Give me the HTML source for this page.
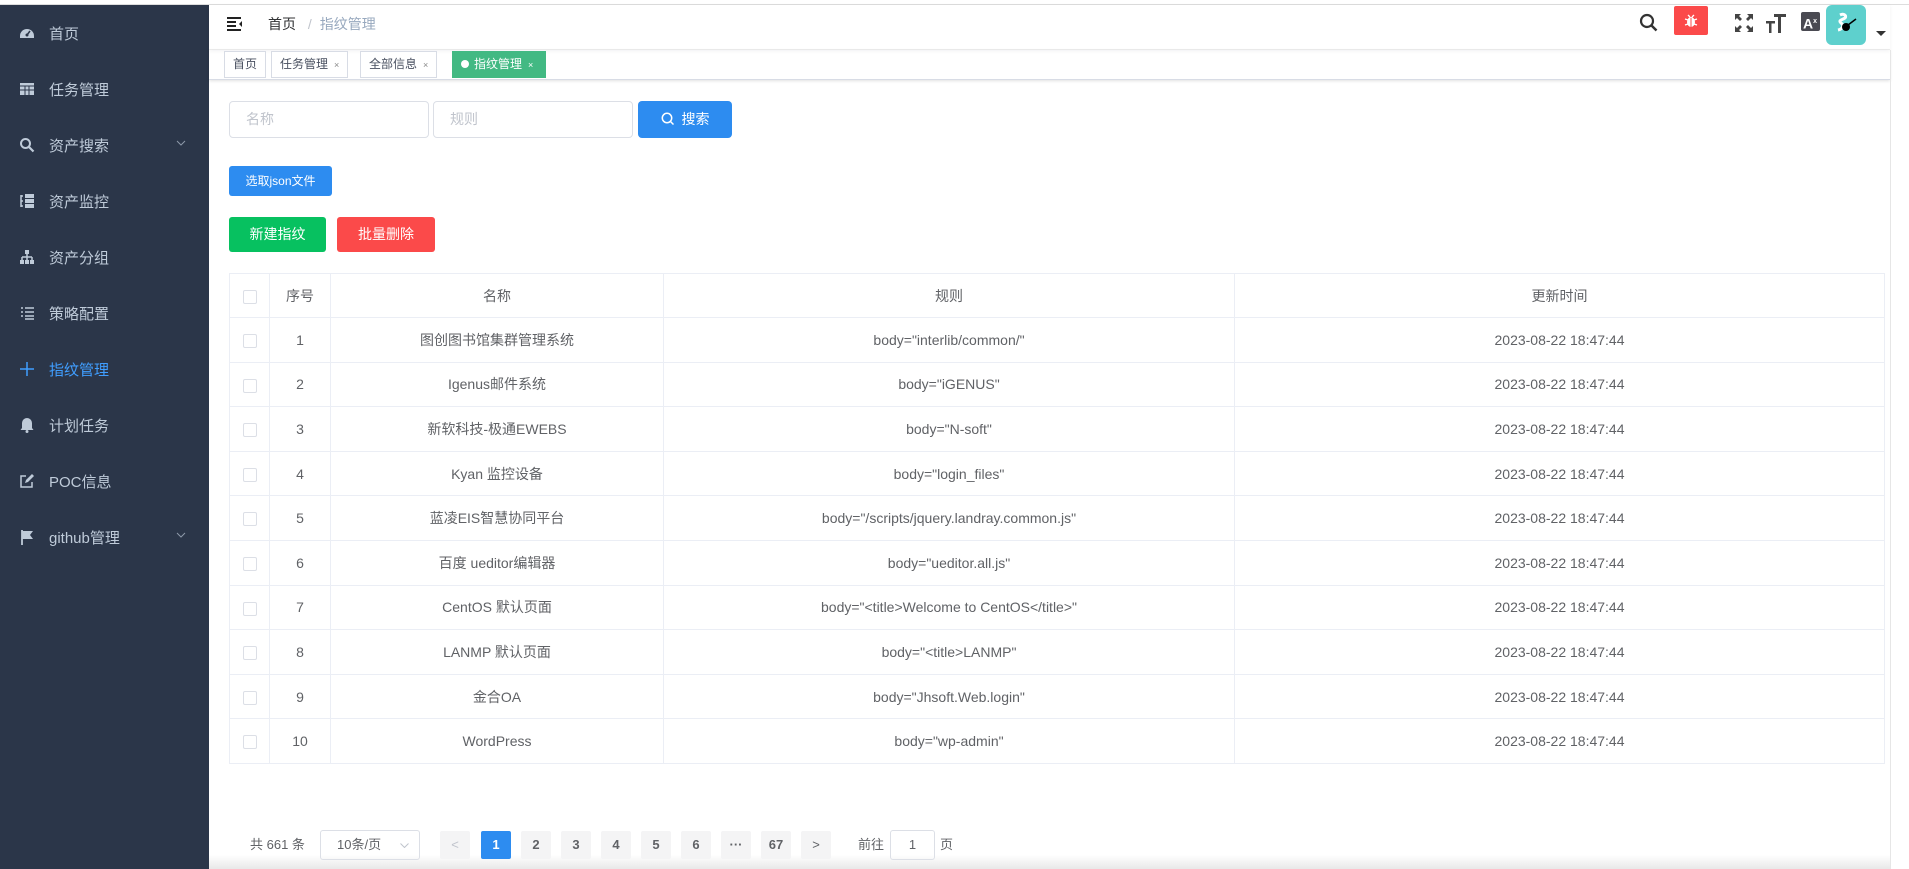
<!DOCTYPE html>
<html><head><meta charset="utf-8"><style>
*{box-sizing:border-box;margin:0;padding:0}
body{width:1909px;height:869px;overflow:hidden;background:#fff;font-family:"Liberation Sans","Noto Sans CJK SC",sans-serif;color:#606266;position:relative}
.topline{position:absolute;left:0;top:0;width:1909px;height:5px;background:#fff;border-bottom:1px solid #ddd}
.side{position:absolute;left:0;top:5px;width:209px;height:864px;background:#2b3649}
.mi{position:absolute;left:0;width:209px;height:56px;color:#bfcbd9;font-size:15px;display:flex;align-items:center}
.mi .ic{position:absolute;left:19px;width:16px;height:16px}
.mi span{position:absolute;left:49px}
.mi .ar{position:absolute;left:176px;top:23px}
.act{color:#409eff}
.abs{position:absolute}
.hdr{position:absolute;left:209px;top:5px;width:1681px;height:45px;border-bottom:1px solid #eee;box-shadow:0 1px 4px rgba(0,21,41,.06)}
.tags{position:absolute;left:209px;top:50px;width:1681px;height:30px;border-bottom:1px solid #d8dce5;box-shadow:0 1px 3px rgba(0,0,0,.12)}
.tag{position:absolute;top:1px;height:27px;border:1px solid #d8dce5;font-size:12px;color:#495060;line-height:25px;padding:0 8px;background:#fff}
.tag i{font-style:normal;font-size:9px;margin-left:6px;color:#888}
.inp{position:absolute;height:37px;border:1px solid #dcdfe6;border-radius:4px;font-size:14px;color:#c0c4cc;padding-left:16px;line-height:35px}
.btn{position:absolute;border-radius:3px;color:#fff;text-align:center;font-size:14px}
table{position:absolute;left:229px;top:273px;width:1656px;border-collapse:collapse;font-size:14px;color:#606266}
td,th{border:1px solid #ebeef5;text-align:center;font-weight:normal;height:44.6px;padding:0}
th{height:44px;color:#606266}
.cb{display:inline-block;width:14px;height:14px;border:1px solid #dcdfe6;border-radius:2px;vertical-align:middle}
.pg{position:absolute;top:831px;height:28px;line-height:28px;font-size:13px;font-weight:bold;color:#606266;text-align:center;background:#f4f4f5;border-radius:2px;width:30px}
</style></head><body>
<div class="topline"></div>
<div class="side">
 <div class="mi" style="top:0"><svg class="ic" viewBox="0 0 16 16"><path d="M1 11a7 7 0 0 1 14 0v2H1z" fill="#bfcbd9"/><circle cx="8" cy="10" r="1.5" fill="#2b3649"/><path d="M8 10l3-4" stroke="#2b3649" stroke-width="1.5"/></svg><span>首页</span></div>
 <div class="mi" style="top:56px"><svg class="ic" viewBox="0 0 16 16"><rect x="1" y="2" width="14" height="12" fill="#bfcbd9"/><path d="M1 5h14M1 9h14M6 5v9M10 5v9" stroke="#2b3649"/></svg><span>任务管理</span></div>
 <div class="mi" style="top:112px"><svg class="ic" viewBox="0 0 16 16"><circle cx="6.5" cy="6.5" r="4.5" stroke="#bfcbd9" stroke-width="2" fill="none"/><path d="M10 10l4.5 4.5" stroke="#bfcbd9" stroke-width="2.2"/></svg><span>资产搜索</span><svg class="ar" width="10" height="6" viewBox="0 0 10 6"><path d="M1 1l4 4 4-4" stroke="#8d99a8" fill="none"/></svg></div>
 <div class="mi" style="top:168px"><svg class="ic" viewBox="0 0 16 16"><path d="M2 2v12M2 3h2M2 8h2M2 13h2" stroke="#bfcbd9" stroke-width="1.5"/><rect x="6" y="1" width="9" height="4" fill="#bfcbd9"/><rect x="6" y="6" width="9" height="4" fill="#bfcbd9"/><rect x="6" y="11" width="9" height="4" fill="#bfcbd9"/></svg><span>资产监控</span></div>
 <div class="mi" style="top:224px"><svg class="ic" viewBox="0 0 16 16"><rect x="6" y="1" width="4" height="4" fill="#bfcbd9"/><path d="M8 5v3M3 8h10M3 8v3M8 8v3M13 8v3" stroke="#bfcbd9" stroke-width="1.5"/><rect x="1" y="11" width="4" height="4" fill="#bfcbd9"/><rect x="6" y="11" width="4" height="4" fill="#bfcbd9"/><rect x="11" y="11" width="4" height="4" fill="#bfcbd9"/></svg><span>资产分组</span></div>
 <div class="mi" style="top:280px"><svg class="ic" viewBox="0 0 16 16"><path d="M2 3h2M6 3h9M2 7h2M6 7h9M2 11h2M6 11h9M6 14h9" stroke="#bfcbd9" stroke-width="1.5"/></svg><span>策略配置</span></div>
 <div class="mi act" style="top:336px"><svg class="ic" viewBox="0 0 16 16"><path d="M8 1v14M1 8h14" stroke="#409eff" stroke-width="1.5"/></svg><span>指纹管理</span></div>
 <div class="mi" style="top:392px"><svg class="ic" viewBox="0 0 16 16"><path d="M8 1a5 5 0 0 0-5 5v5l-1.5 2h13L13 11V6a5 5 0 0 0-5-5z" fill="#bfcbd9"/><circle cx="8" cy="14.5" r="1.5" fill="#bfcbd9"/></svg><span>计划任务</span></div>
 <div class="mi" style="top:448px"><svg class="ic" viewBox="0 0 16 16"><path d="M13 9v5H2V3h5" stroke="#bfcbd9" stroke-width="1.5" fill="none"/><path d="M6 10l1-3 6-6 2 2-6 6z" fill="#bfcbd9"/></svg><span>POC信息</span></div>
 <div class="mi" style="top:504px"><svg class="ic" viewBox="0 0 16 16"><path d="M3 1v15" stroke="#bfcbd9" stroke-width="1.8"/><path d="M3 2h11l-3 4 3 4H3z" fill="#bfcbd9"/></svg><span>github管理</span><svg class="ar" width="10" height="6" viewBox="0 0 10 6"><path d="M1 1l4 4 4-4" stroke="#8d99a8" fill="none"/></svg></div>
</div>
<div class="hdr">
 <svg class="abs" style="left:17px;top:11px" width="18" height="16" viewBox="0 0 18 16"><path d="M1 2h14M1 6h9M1 10h9M1 14h14" stroke="#222" stroke-width="2"/><path d="M16 5v6l-3-3z" fill="#222"/></svg>
 <div class="abs" style="left:59px;top:9px;font-size:14px;color:#303133">首页 <span style="color:#c0c4cc;margin:0 8px">/</span><span style="color:#97a8be">指纹管理</span></div>
 <svg class="abs" style="left:1430px;top:8px" width="20" height="20" viewBox="0 0 20 20"><circle cx="8" cy="8" r="6" stroke="#333" stroke-width="2.2" fill="none"/><path d="M12.5 12.5l5 5" stroke="#333" stroke-width="2.5"/></svg>
 <div class="abs" style="left:1465px;top:1px;width:34px;height:29px;background:#fb4a4a;border-radius:2px"><svg style="margin:7px 10px" width="14" height="15" viewBox="0 0 14 15"><ellipse cx="7" cy="9" rx="4" ry="5" fill="#fff"/><path d="M1 6l3 1M13 6l-3 1M1 12l3-1M13 12l-3-1M4 2l2 2M10 2l-2 2" stroke="#fff" stroke-width="1.3"/><path d="M7 5v9" stroke="#fb4a4a"/></svg></div>
 <svg class="abs" style="left:1525px;top:8px" width="20" height="20" viewBox="0 0 20 20" fill="#444"><path d="M1 1h6l-2 2 3 3-2 2-3-3-2 2zM19 1v6l-2-2-3 3-2-2 3-3-2-2zM1 19v-6l2 2 3-3 2 2-3 3 2 2zM19 19h-6l2-2-3-3 2-2 3 3 2-2z"/></svg>
 <svg class="abs" style="left:1556px;top:7px" width="22" height="22" viewBox="0 0 22 22" fill="#444"><rect x="9" y="2" width="12" height="3"/><rect x="13" y="2" width="3" height="19"/><rect x="1" y="9" width="9" height="2.5"/><rect x="4" y="9" width="2.5" height="12"/></svg>
 <div class="abs" style="left:1592px;top:7px;width:19px;height:19px;background:#4a4a52;border-radius:2px;color:#fff;font-size:14px;font-weight:bold;line-height:20px;padding-left:2px">A<sup style="font-size:7px">x</sup></div>
 <div class="abs" style="left:1617px;top:0;width:40px;height:40px;background:#5ed0cd;border-radius:6px"><svg width="40" height="40" viewBox="0 0 40 40"><path d="M14 10c4-2 7 1 5 3-3 2-7 2-4 5 3 2 2 6-3 7" stroke="#fff" stroke-width="3" fill="none"/><circle cx="20" cy="22" r="4" fill="#000"/><path d="M22 20l8-6" stroke="#000" stroke-width="1.5"/></svg></div>
 <div class="abs" style="left:1667px;top:26px;width:0;height:0;border:5px solid transparent;border-top:5px solid #333"></div>
</div>
<div class="tags">
 <div class="tag" style="left:15px">首页</div>
 <div class="tag" style="left:62px">任务管理<i>×</i></div>
 <div class="tag" style="left:151px">全部信息<i>×</i></div>
 <div class="tag" style="left:243px;background:#42b983;border-color:#42b983;color:#fff;padding-right:12px"><span style="display:inline-block;width:8px;height:8px;border-radius:50%;background:#fff;margin-right:5px"></span>指纹管理<i style="color:#fff">×</i></div>
</div>
<div class="abs" style="left:1890px;top:50px;width:1px;height:819px;background:#e6e6e6"></div>
<div class="inp" style="left:229px;top:101px;width:200px">名称</div>
<div class="inp" style="left:433px;top:101px;width:200px">规则</div>
<div class="btn" style="left:638px;top:101px;width:94px;height:37px;line-height:37px;background:#2d8cf0;border-radius:4px"><svg width="13" height="13" viewBox="0 0 13 13" style="vertical-align:-1px;margin-right:8px"><circle cx="6" cy="6" r="4.7" stroke="#fff" stroke-width="1.5" fill="none"/><path d="M9.5 9.5l3 3" stroke="#fff" stroke-width="1.5"/></svg>搜索</div>
<div class="btn" style="left:229px;top:166px;width:103px;height:30px;line-height:30px;background:#2d8cf0;font-size:12px">选取json文件</div>
<div class="btn" style="left:229px;top:217px;width:97px;height:35px;line-height:35px;background:#07c160">新建指纹</div>
<div class="btn" style="left:337px;top:217px;width:98px;height:35px;line-height:35px;background:#fb4a4a">批量删除</div>
<table>
<tr><th style="width:40px"><span class="cb"></span></th><th style="width:61px">序号</th><th style="width:333px">名称</th><th style="width:571px">规则</th><th>更新时间</th></tr>
<tr><td><span class="cb"></span></td><td>1</td><td>图创图书馆集群管理系统</td><td>body="interlib/common/"</td><td>2023-08-22 18:47:44</td></tr>
<tr><td><span class="cb"></span></td><td>2</td><td>Igenus邮件系统</td><td>body="iGENUS"</td><td>2023-08-22 18:47:44</td></tr>
<tr><td><span class="cb"></span></td><td>3</td><td>新软科技-极通EWEBS</td><td>body="N-soft"</td><td>2023-08-22 18:47:44</td></tr>
<tr><td><span class="cb"></span></td><td>4</td><td>Kyan 监控设备</td><td>body="login_files"</td><td>2023-08-22 18:47:44</td></tr>
<tr><td><span class="cb"></span></td><td>5</td><td>蓝凌EIS智慧协同平台</td><td>body="/scripts/jquery.landray.common.js"</td><td>2023-08-22 18:47:44</td></tr>
<tr><td><span class="cb"></span></td><td>6</td><td>百度 ueditor编辑器</td><td>body="ueditor.all.js"</td><td>2023-08-22 18:47:44</td></tr>
<tr><td><span class="cb"></span></td><td>7</td><td>CentOS 默认页面</td><td>body="&lt;title&gt;Welcome to CentOS&lt;/title&gt;"</td><td>2023-08-22 18:47:44</td></tr>
<tr><td><span class="cb"></span></td><td>8</td><td>LANMP 默认页面</td><td>body="&lt;title&gt;LANMP"</td><td>2023-08-22 18:47:44</td></tr>
<tr><td><span class="cb"></span></td><td>9</td><td>金合OA</td><td>body="Jhsoft.Web.login"</td><td>2023-08-22 18:47:44</td></tr>
<tr><td><span class="cb"></span></td><td>10</td><td>WordPress</td><td>body="wp-admin"</td><td>2023-08-22 18:47:44</td></tr>
</table>
<div class="abs" style="left:209px;top:855px;width:1681px;height:14px;background:linear-gradient(#fff,#e8e8e8)"></div>
<div class="abs" style="left:250px;top:831px;line-height:28px;font-size:13px">共 661 条</div>
<div class="abs" style="left:320px;top:830px;width:100px;height:30px;border:1px solid #dcdfe6;border-radius:3px;font-size:13px;line-height:28px;padding-left:16px">10条/页<svg style="position:absolute;right:10px;top:12px" width="9" height="5" viewBox="0 0 9 5"><path d="M.5.5l4 4 4-4" stroke="#c0c4cc" fill="none"/></svg></div>
<div class="pg" style="left:440px;color:#c0c4cc;font-weight:normal">&lt;</div>
<div class="pg" style="left:481px;background:#2d8cf0;color:#fff">1</div>
<div class="pg" style="left:521px">2</div>
<div class="pg" style="left:561px">3</div>
<div class="pg" style="left:601px">4</div>
<div class="pg" style="left:641px">5</div>
<div class="pg" style="left:681px">6</div>
<div class="pg" style="left:721px">···</div>
<div class="pg" style="left:761px">67</div>
<div class="pg" style="left:801px;font-weight:normal">&gt;</div>
<div class="abs" style="left:858px;top:831px;line-height:28px;font-size:13px">前往</div>
<div class="abs" style="left:890px;top:830px;width:45px;height:30px;border:1px solid #dcdfe6;border-radius:3px;font-size:13px;line-height:28px;text-align:center">1</div>
<div class="abs" style="left:940px;top:831px;line-height:28px;font-size:13px">页</div>
</body></html>
